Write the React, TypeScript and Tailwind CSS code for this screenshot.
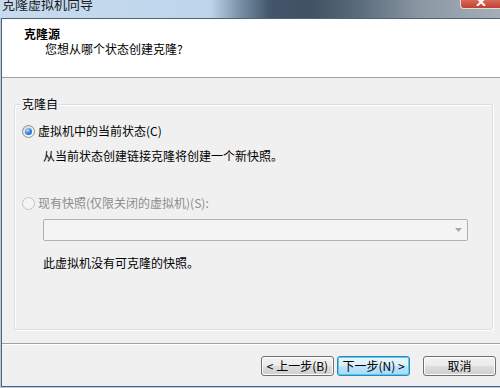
import React from "react";

const FONT = { fontFamily: '"Noto Sans CJK SC", "Liberation Sans", sans-serif' };

function Radio({ checked, disabled }: { checked?: boolean; disabled?: boolean }) {
  return (
    <span
      className={`flex h-[13px] w-[13px] shrink-0 items-center justify-center rounded-full border ${
        disabled
          ? "border-[#c4c4c4] bg-[#f4f4f4]"
          : "border-[#8e8f8f] bg-gradient-to-br from-[#d6d6d6] to-[#fdfdfd]"
      }`}
    >
      {checked && (
        <span className="h-[7px] w-[7px] rounded-full bg-[radial-gradient(circle_at_35%_30%,#b8e0ff_0%,#3c8ce0_45%,#0f4d9c_100%)]" />
      )}
    </span>
  );
}

function Button({ children, focused }: { children: React.ReactNode; focused?: boolean }) {
  return (
    <button
      className={`flex h-[20px] w-[73px] items-center justify-center rounded-[3px] border text-[12px] leading-[14px] text-black ${
        focused
          ? "border-[#3c7fb1] bg-[linear-gradient(#eaf6fd_0%,#d9f0fc_50%,#bee6fd_51%,#a7d9f5_100%)] shadow-[inset_0_0_0_1px_#48d1f8]"
          : "border-[#707070] bg-[linear-gradient(#f2f2f2_0%,#ebebeb_50%,#dddddd_51%,#cfcfcf_100%)] shadow-[inset_0_0_0_1px_#fcfcfc]"
      }`}
    >
      {children}
    </button>
  );
}

export default function App() {
  return (
    <div
      className="flex h-[388px] w-[500px] flex-col overflow-hidden bg-[#b9cde2] text-[12px] leading-[14px] text-black"
      style={FONT}
    >
      {/* Title bar */}
      <div className="relative h-[18px] shrink-0 bg-[linear-gradient(90deg,#c6dbef_0%,#bfd5eb_42%,#7890a6_48%,#43566a_54%,#3f5162_62%,#5b6c7c_72%,#8b98a4_84%,#a3aeb8_100%)]">
        <div className="pl-[2px] pt-0 text-[13px] leading-[13px] -mt-[3px] text-[#1a1a1a]">克隆虚拟机向导</div>
        <div className="absolute right-0 top-0 flex h-[9px] w-[40px] justify-center rounded-bl-[4px] border-b border-l border-[#e8d8d8] bg-[linear-gradient(#d86a5a,#c2402f)]">
          <svg width="12" height="8" viewBox="0 0 12 8" className="-mt-[2px]">
            <path d="M2 0 L6 4 L10 0 M2 8 L6 4 L10 8" stroke="#fff" strokeWidth="2" fill="none" />
          </svg>
        </div>
      </div>

      {/* Client area */}
      <div className="ml-[1px] flex flex-1 flex-col border-b border-l border-t border-[#4e6276] bg-[#f0f0f0]">
        {/* Header */}
        <div className="h-[59px] shrink-0 border-b border-[#a0a0a0] bg-white">
          <div className="pl-[22px] pt-[8px] text-[12px] font-bold leading-[14px]">克隆源</div>
          <div className="pl-[43px] pt-[1px] leading-[14px]">您想从哪个状态创建克隆?</div>
        </div>

        {/* Body */}
        <div className="flex flex-1 flex-col">
          <div className="relative ml-[12px] mt-[26px] h-[226px] w-[479px] rounded-[3px] border border-[#d5dfe5] shadow-[inset_1px_1px_0_#fff,1px_1px_0_#fff]">
            <span className="absolute -top-[8px] left-[6px] bg-[#f0f0f0] px-[1px] leading-[14px]">克隆自</span>

            <div className="mt-[19px] flex items-center gap-[3px] pl-[7px]">
              <Radio checked />
              <span>虚拟机中的当前状态(C)</span>
            </div>
            <div className="mt-[11px] pl-[28px]">从当前状态创建链接克隆将创建一个新快照。</div>

            <div className="mt-[33px] flex items-center gap-[3px] pl-[7px] text-[#8d8d8d]">
              <Radio disabled />
              <span>现有快照(仅限关闭的虚拟机)(S):</span>
            </div>
            <div className="ml-[28px] mt-[9px] flex h-[22px] w-[425px] items-center justify-end rounded-[2px] border border-[#adb2b5] bg-[#f4f4f4] pr-[5px]">
              <svg width="7" height="4" viewBox="0 0 7 4">
                <path d="M0 0 H7 L3.5 4 Z" fill="#a8a8a8" />
              </svg>
            </div>
            <div className="mt-[15px] pl-[28px]">此虚拟机没有可克隆的快照。</div>
          </div>

          {/* Separator */}
          <div className="mt-[13px] h-[2px] border-t border-[#a0a0a0] bg-white" />

          {/* Buttons */}
          <div className="mt-[11px] flex justify-end pr-[4px]">
            <div className="flex gap-[3px]">
              <Button>&lt; 上一步(B)</Button>
              <Button focused>下一步(N) &gt;</Button>
            </div>
            <div className="ml-[13px]">
              <Button>取消</Button>
            </div>
          </div>
        </div>
      </div>
      <div className="h-[1px] shrink-0" />
    </div>
  );
}
